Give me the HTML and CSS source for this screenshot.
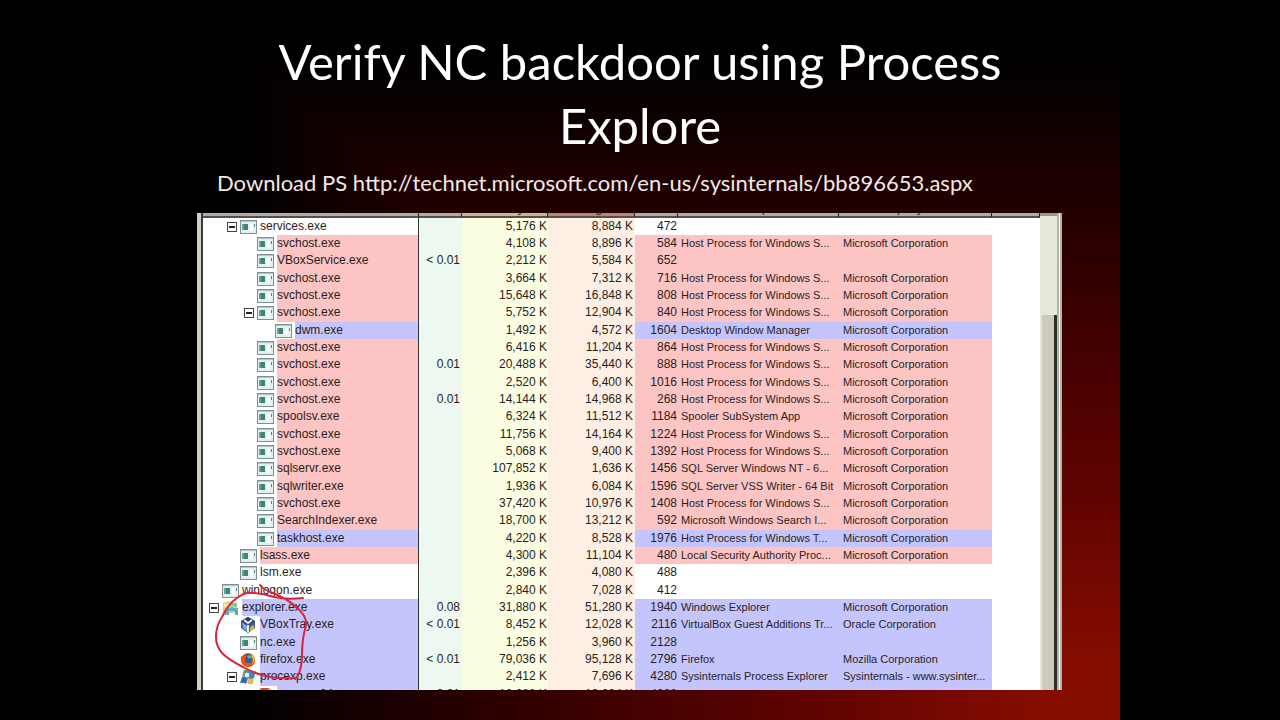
FILE: index.html
```html
<!DOCTYPE html>
<html lang="en">
<head>
  <meta charset="UTF-8">
  <meta name="viewport" content="width=device-width, initial-scale=1.0">
  <title>Verify NC backdoor using Process Explore</title>
  <link rel="stylesheet" href="styles.css">
</head>
<body>

  <!-- Icons shared by the process rows -->
  <svg class="sprites" aria-hidden="true">
    <symbol id="app" viewBox="0 0 17 14">
      <rect x="0" y="0" width="17" height="14" fill="#7f9094"/>
      <rect x="1" y="2" width="15" height="11" fill="#e4f0ee"/>
      <rect x="1" y="1" width="15" height="1" fill="#b4c4c8"/>
      <rect x="2" y="4" width="6" height="6" fill="#3d8474"/>
      <rect x="2" y="4" width="2" height="6" fill="#6b9f9c"/>
      <rect x="10" y="4" width="3" height="7" fill="#f8fcfa"/>
      <rect x="14" y="4" width="1" height="3" fill="#5f7f7c"/>
    </symbol>
    <symbol id="folder" viewBox="0 0 17 16">
      <path d="M1 3 7 1l2 2h6v10H1z" fill="#e6cf6a"/>
      <path d="M8 3h7v4H8z" fill="#8fc676"/>
      <path d="M2 4h5v3H2z" fill="#f6eba6"/>
      <path d="M3 15V9q5-5 13-1v7h-3v-4H7v4z" fill="#58a9cc"/>
      <path d="M5 8q5-3 10 0" stroke="#bce3ef" fill="none"/>
    </symbol>
    <symbol id="vbox" viewBox="0 0 17 16">
      <path d="m8 0 7 4v7l-7 5-7-5V4z" fill="#3b5b8f"/>
      <path d="m8 0 7 4-7 4-7-4z" fill="#274069"/>
      <path d="m2 5 5 4v5l-4-3z" fill="#89a9d4"/>
      <path d="m4 3 4 3 4-3M8 8v7" stroke="#e8eef8" stroke-width="2" fill="none"/>
      <path d="m10 10 4-2v3l-4 4z" fill="#d8b849"/>
    </symbol>
    <symbol id="firefox" viewBox="0 0 17 16">
      <circle cx="8" cy="8" r="7" fill="#e06a1c"/>
      <circle cx="8" cy="7" r="5" fill="#2e5f96"/>
      <path d="M1 4Q0 15 9 15q7-1 6-9-1 6-6 5-5 0-4-4 0-2 2-3-3-1-4 1z" fill="#e8551a"/>
      <path d="M13 2q4 6-1 10 2-5-1-8z" fill="#f3b63e"/>
      <path d="M7 4q3-2 5 1l-3 2z" fill="#62b0d8"/>
    </symbol>
    <symbol id="procexp" viewBox="0 0 17 16">
      <path d="M4 1q4-1 6 1l-2 6Q5 6 2 8z" fill="#5da345"/>
      <path d="M10 2q3 2 6 0l-2 7q-3 2-6 0z" fill="#3f86c0"/>
      <path d="M2 8q3-1 6 1l-2 6q-3-2-6-1z" fill="#3668b0"/>
      <path d="M8 9q3 2 6 0l-1 6q-4 1-6-1z" fill="#e4bd3c"/>
      <circle cx="7" cy="6" r="3" fill="#d9ecf5" stroke="#577f9a"/>
    </symbol>
    <symbol id="procexp64" viewBox="0 0 17 16">
      <path d="M4 1h8l4 5v9H1V5z" fill="#d84b25"/>
      <path d="M10 2h4v3z" fill="#f0b454"/>
    </symbol>
  </svg>

  <main class="slide">
    <h1 class="title">Verify NC backdoor using Process Explore</h1>
    <p class="subtitle">Download PS <a href="http://technet.microsoft.com/en-us/sysinternals/bb896653.aspx">http://technet.microsoft.com/en-us/sysinternals/bb896653.aspx</a></p>

    <div class="window">
      <div class="list">
        <table class="processes">
          <colgroup>
            <col class="c-name"><col class="c-cpu"><col class="c-private"><col class="c-working"><col class="c-pid"><col class="c-desc"><col class="c-company"><col>
          </colgroup>
          <thead>
            <tr>
              <th aria-label="Process"></th><th aria-label="CPU"></th><th class="private"><span>Private Bytes</span></th><th class="working"><span>Working Set</span></th><th aria-label="PID"></th><th><span>Description</span></th><th><span>Company Name</span></th><th></th>
            </tr>
          </thead>
          <tbody>
            <tr><td><div class="name l1"><button class="toggle" aria-label="Collapse services.exe"></button><svg class="icon"><use href="#app"/></svg><span>services.exe</span></div></td><td></td><td>5,176 K</td><td>8,884 K</td><td>472</td><td></td><td></td><td></td></tr>
            <tr class="service"><td><div class="name l2"><svg class="icon"><use href="#app"/></svg><span>svchost.exe</span></div></td><td></td><td>4,108 K</td><td>8,896 K</td><td>584</td><td>Host Process for Windows S...</td><td>Microsoft Corporation</td><td></td></tr>
            <tr class="service"><td><div class="name l2"><svg class="icon"><use href="#app"/></svg><span>VBoxService.exe</span></div></td><td>&lt; 0.01</td><td>2,212 K</td><td>5,584 K</td><td>652</td><td></td><td></td><td></td></tr>
            <tr class="service"><td><div class="name l2"><svg class="icon"><use href="#app"/></svg><span>svchost.exe</span></div></td><td></td><td>3,664 K</td><td>7,312 K</td><td>716</td><td>Host Process for Windows S...</td><td>Microsoft Corporation</td><td></td></tr>
            <tr class="service"><td><div class="name l2"><svg class="icon"><use href="#app"/></svg><span>svchost.exe</span></div></td><td></td><td>15,648 K</td><td>16,848 K</td><td>808</td><td>Host Process for Windows S...</td><td>Microsoft Corporation</td><td></td></tr>
            <tr class="service"><td><div class="name l2"><button class="toggle" aria-label="Collapse svchost.exe"></button><svg class="icon"><use href="#app"/></svg><span>svchost.exe</span></div></td><td></td><td>5,752 K</td><td>12,904 K</td><td>840</td><td>Host Process for Windows S...</td><td>Microsoft Corporation</td><td></td></tr>
            <tr class="own"><td><div class="name l3"><svg class="icon"><use href="#app"/></svg><span>dwm.exe</span></div></td><td></td><td>1,492 K</td><td>4,572 K</td><td>1604</td><td>Desktop Window Manager</td><td>Microsoft Corporation</td><td></td></tr>
            <tr class="service"><td><div class="name l2"><svg class="icon"><use href="#app"/></svg><span>svchost.exe</span></div></td><td></td><td>6,416 K</td><td>11,204 K</td><td>864</td><td>Host Process for Windows S...</td><td>Microsoft Corporation</td><td></td></tr>
            <tr class="service"><td><div class="name l2"><svg class="icon"><use href="#app"/></svg><span>svchost.exe</span></div></td><td>0.01</td><td>20,488 K</td><td>35,440 K</td><td>888</td><td>Host Process for Windows S...</td><td>Microsoft Corporation</td><td></td></tr>
            <tr class="service"><td><div class="name l2"><svg class="icon"><use href="#app"/></svg><span>svchost.exe</span></div></td><td></td><td>2,520 K</td><td>6,400 K</td><td>1016</td><td>Host Process for Windows S...</td><td>Microsoft Corporation</td><td></td></tr>
            <tr class="service"><td><div class="name l2"><svg class="icon"><use href="#app"/></svg><span>svchost.exe</span></div></td><td>0.01</td><td>14,144 K</td><td>14,968 K</td><td>268</td><td>Host Process for Windows S...</td><td>Microsoft Corporation</td><td></td></tr>
            <tr class="service"><td><div class="name l2"><svg class="icon"><use href="#app"/></svg><span>spoolsv.exe</span></div></td><td></td><td>6,324 K</td><td>11,512 K</td><td>1184</td><td>Spooler SubSystem App</td><td>Microsoft Corporation</td><td></td></tr>
            <tr class="service"><td><div class="name l2"><svg class="icon"><use href="#app"/></svg><span>svchost.exe</span></div></td><td></td><td>11,756 K</td><td>14,164 K</td><td>1224</td><td>Host Process for Windows S...</td><td>Microsoft Corporation</td><td></td></tr>
            <tr class="service"><td><div class="name l2"><svg class="icon"><use href="#app"/></svg><span>svchost.exe</span></div></td><td></td><td>5,068 K</td><td>9,400 K</td><td>1392</td><td>Host Process for Windows S...</td><td>Microsoft Corporation</td><td></td></tr>
            <tr class="service"><td><div class="name l2"><svg class="icon"><use href="#app"/></svg><span>sqlservr.exe</span></div></td><td></td><td>107,852 K</td><td>1,636 K</td><td>1456</td><td>SQL Server Windows NT - 6...</td><td>Microsoft Corporation</td><td></td></tr>
            <tr class="service"><td><div class="name l2"><svg class="icon"><use href="#app"/></svg><span>sqlwriter.exe</span></div></td><td></td><td>1,936 K</td><td>6,084 K</td><td>1596</td><td>SQL Server VSS Writer - 64 Bit</td><td>Microsoft Corporation</td><td></td></tr>
            <tr class="service"><td><div class="name l2"><svg class="icon"><use href="#app"/></svg><span>svchost.exe</span></div></td><td></td><td>37,420 K</td><td>10,976 K</td><td>1408</td><td>Host Process for Windows S...</td><td>Microsoft Corporation</td><td></td></tr>
            <tr class="service"><td><div class="name l2"><svg class="icon"><use href="#app"/></svg><span>SearchIndexer.exe</span></div></td><td></td><td>18,700 K</td><td>13,212 K</td><td>592</td><td>Microsoft Windows Search I...</td><td>Microsoft Corporation</td><td></td></tr>
            <tr class="own"><td><div class="name l2"><svg class="icon"><use href="#app"/></svg><span>taskhost.exe</span></div></td><td></td><td>4,220 K</td><td>8,528 K</td><td>1976</td><td>Host Process for Windows T...</td><td>Microsoft Corporation</td><td></td></tr>
            <tr class="service"><td><div class="name l1"><svg class="icon"><use href="#app"/></svg><span>lsass.exe</span></div></td><td></td><td>4,300 K</td><td>11,104 K</td><td>480</td><td>Local Security Authority Proc...</td><td>Microsoft Corporation</td><td></td></tr>
            <tr><td><div class="name l1"><svg class="icon"><use href="#app"/></svg><span>lsm.exe</span></div></td><td></td><td>2,396 K</td><td>4,080 K</td><td>488</td><td></td><td></td><td></td></tr>
            <tr><td><div class="name"><svg class="icon"><use href="#app"/></svg><span>winlogon.exe</span></div></td><td></td><td>2,840 K</td><td>7,028 K</td><td>412</td><td></td><td></td><td></td></tr>
            <tr class="own"><td><div class="name"><button class="toggle" aria-label="Collapse explorer.exe"></button><svg class="icon"><use href="#folder"/></svg><span>explorer.exe</span></div></td><td>0.08</td><td>31,880 K</td><td>51,280 K</td><td>1940</td><td>Windows Explorer</td><td>Microsoft Corporation</td><td></td></tr>
            <tr class="own"><td><div class="name l1"><svg class="icon"><use href="#vbox"/></svg><span>VBoxTray.exe</span></div></td><td>&lt; 0.01</td><td>8,452 K</td><td>12,028 K</td><td>2116</td><td>VirtualBox Guest Additions Tr...</td><td>Oracle Corporation</td><td></td></tr>
            <tr class="own"><td><div class="name l1"><svg class="icon"><use href="#app"/></svg><span>nc.exe</span></div></td><td></td><td>1,256 K</td><td>3,960 K</td><td>2128</td><td></td><td></td><td></td></tr>
            <tr class="own"><td><div class="name l1"><svg class="icon"><use href="#firefox"/></svg><span>firefox.exe</span></div></td><td>&lt; 0.01</td><td>79,036 K</td><td>95,128 K</td><td>2796</td><td>Firefox</td><td>Mozilla Corporation</td><td></td></tr>
            <tr class="own"><td><div class="name l1"><button class="toggle" aria-label="Collapse procexp.exe"></button><svg class="icon"><use href="#procexp"/></svg><span>procexp.exe</span></div></td><td></td><td>2,412 K</td><td>7,696 K</td><td>4280</td><td>Sysinternals Process Explorer</td><td>Sysinternals - www.sysinter...</td><td></td></tr>
            <tr class="own"><td><div class="name l2"><svg class="icon"><use href="#procexp64"/></svg><span>procexp64.exe</span></div></td><td>0.01</td><td>18,088 K</td><td>13,204 K</td><td>4288</td><td>Sysinternals Process Explorer</td><td>Sysinternals - www.sysinter...</td><td></td></tr>
          </tbody>
        </table>
      </div>
      <div class="scrollbar"><div class="thumb"></div></div>

      <!-- Hand-drawn mark around nc.exe -->
      <svg class="marker" viewBox="0 0 98 102" aria-hidden="true">
        <path d="M48 5Q52 10 61 13Q76 19 85 28Q95 36 94 45Q90 60 90 73Q90 84 88 90Q86 98 83 98Q70 99 58 97Q43 94 31 87Q17 80 10 73Q4 66 4 57Q4 46 10 37Q16 24 25 18Q30 14 35 13Q48 12 62 17Q75 20 91 18"/>
      </svg>
    </div>
  </main>

</body>
</html>
```

FILE: styles.css
```css
* { margin: 0; padding: 0; box-sizing: border-box; }

body {
  background: #000;
  overflow: hidden;
}

.sprites { display: none; }

/* The darker of the two gradients wins, so the red fades in square bands */
.slide {
  display: flex;
  flex-direction: column;
  width: 75%;
  height: 100vh;
  margin: 0 auto;
  padding: 29px 58px 30px 37px;
  background:
    linear-gradient(to bottom, #000 8%, #0a0000 14%, #220000 28%, #380000 42%, #4e0200 56%, #620400 70%, #780900 83%, #840d00 92%),
    linear-gradient(to right, #000 8%, #0a0000 14%, #220000 28%, #380000 42%, #4e0200 56%, #620400 70%, #780900 83%, #840d00 92%);
  background-blend-mode: darken;
  color: #fff;
  font-family: Lato, sans-serif;
}

.title {
  padding-left: 21px;
  font-size: 49px;
  font-weight: 400;
  line-height: 64px;
  text-align: center;
}

.subtitle {
  padding: 11px 0 15px 20px;
  color: #f4e8e6;
  font-size: 22px;
  line-height: 30px;
  white-space: nowrap;
}
.subtitle a { color: inherit; text-decoration: none; }

/* Process Explorer window */
.window {
  position: relative;
  display: flex;
  flex: 1;
  min-height: 0;
  overflow: hidden;
  border-left: 4px solid #d2d0c6;
  border-right: 5px double #b4b4a8;
  background: #fff;
}
.list {
  flex: 1;
  border-left: 2px solid #3a3a38;
  overflow: hidden;
}

.processes {
  width: 100%;
  table-layout: fixed;
  border-collapse: separate;
  border-spacing: 0;
  color: #2a1e22;
  font-family: "Liberation Sans", sans-serif;
  font-size: 12px;
  line-height: 16px;
  white-space: nowrap;
}
.c-name { width: 216px; }
.c-cpu { width: 43px; }
.c-private { width: 86px; }
.c-working { width: 87px; }
.c-pid { width: 43px; }
.c-desc { width: 161px; }
.c-company { width: 153px; }

.processes th {
  height: 5px;
  background: #b0aca6;
  border-right: 1px solid #222;
  border-bottom: 2px solid #55504c;
  font-weight: 400;
}
.processes th.private { background: #c8b890; }
.processes th.working { background: #b88478; }
.processes th span {
  display: flex;
  align-items: flex-end;
  justify-content: center;
  height: 3px;
  overflow: hidden;
}

.processes td { height: 17px; vertical-align: top; }
.processes tr:nth-child(3n) td { height: 18px; }

.processes td:nth-child(1) { border-right: 1px solid #333; }
.processes td:nth-child(2) { background: #edf8f0; padding-right: 2px; text-align: right; }
.processes td:nth-child(3) { background: #fafde2; padding-right: 1px; text-align: right; }
.processes td:nth-child(4) { background: #fdefe3; padding-right: 2px; text-align: right; }
.processes td:nth-child(5) { padding-right: 1px; text-align: right; }
.processes td:nth-child(6) { padding-left: 3px; font-size: 11px; }
.processes td:nth-child(7) { padding-left: 4px; font-size: 11px; }

.service .name span,
.service td:nth-child(n+5):nth-child(-n+7) { background: #fcc4c2; }
.own .name span,
.own td:nth-child(n+5):nth-child(-n+7) { background: #c4c5fd; }

/* Tree column */
.name {
  display: flex;
  align-items: center;
  height: 100%;
  padding-left: 19px;
}
.name.l1 { padding-left: 37px; }
.name.l2 { padding-left: 54px; }
.name.l3 { padding-left: 72px; }
.name span { flex: 1; height: 100%; }
.icon {
  flex: none;
  width: 17px;
  height: 16px;
  margin-right: 3px;
}
.toggle {
  flex: none;
  width: 10px;
  height: 10px;
  margin-left: -13px;
  margin-right: 3px;
  border: 1px solid #444;
  background: linear-gradient(#222, #222) center / 6px 2px no-repeat #fff;
}

.scrollbar {
  display: flex;
  flex-direction: column;
  width: 17px;
  padding-top: 99px;
  background: #e4e7da;
  border-top: 3px solid #9c9890;
}
.thumb {
  flex: 1;
  background: #cdc9bd;
  border-left: 2px solid #e6e4dc;
  border-right: 3px solid #2c302c;
}

.marker {
  position: absolute;
  left: 11px;
  top: 367px;
  width: 98px;
  height: 102px;
}
.marker path {
  fill: none;
  stroke: #d8253c;
  stroke-width: 2;
  stroke-linecap: round;
}
```
